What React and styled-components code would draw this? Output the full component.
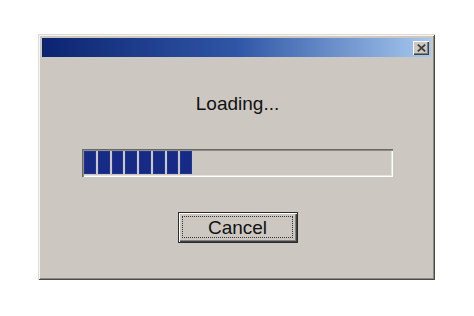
import React from "react";
import styled, { createGlobalStyle } from "styled-components";

const Global = createGlobalStyle`
  html, body { margin: 0; padding: 0; background: #ffffff; }
  body { font-family: "Liberation Sans", Arial, sans-serif; }
`;

const Page = styled.div`
  width: 474px;
  height: 316px;
  box-sizing: border-box;
  padding: 34px 0 0 38px;
`;

const Window = styled.div`
  width: 397px;
  height: 246px;
  box-sizing: border-box;
  padding: 4px;
  background: #ccc8c1;
  display: flex;
  flex-direction: column;
  box-shadow:
    inset 1px 1px 0 #dedad4,
    inset -1px -1px 0 #4a4a48,
    inset 2px 2px 0 #f6f5f2,
    inset -2px -2px 0 #8a8884;
`;

const TitleBar = styled.div`
  height: 19px;
  display: flex;
  align-items: center;
  justify-content: flex-end;
  padding-right: 2px;
  background: linear-gradient(to right, #0c2470 0%, #2f56a6 50%, #a6c8ee 100%);
`;

const CloseButton = styled.div`
  width: 16px;
  height: 14px;
  box-sizing: border-box;
  margin-top: 1px;
  background: #ccc8c1;
  display: flex;
  align-items: center;
  justify-content: center;
  box-shadow:
    inset 1px 1px 0 #ffffff,
    inset -1px -1px 0 #404040,
    inset -2px -2px 0 #808080;
`;

const Content = styled.div`
  flex: 1;
  display: flex;
  flex-direction: column;
  align-items: center;
  padding-top: 36px;
`;

const Message = styled.div`
  font-size: 19px;
  line-height: 22px;
  color: #111;
  margin-left: 2px;
`;

const Progress = styled.div`
  margin-top: 34px;
  width: 311px;
  height: 28px;
  box-sizing: border-box;
  padding: 2px 2px 3px 2px;
  display: flex;
  gap: 2px;
  margin-left: 2px;
  box-shadow:
    inset 1px 1px 0 #6a6864,
    inset 2px 2px 0 #8e8c88,
    inset -1px -1px 0 #ffffff,
    inset -2px -2px 0 #e4e2de;
`;

const Block = styled.div`
  width: 11.75px;
  height: 100%;
  background: #172a86;
  box-shadow: inset 0 0 0 1px #1f3594;
`;

const Button = styled.button`
  margin-top: 35px;
  margin-left: 2px;
  width: 120px;
  height: 31px;
  box-sizing: border-box;
  padding: 0;
  border: 1px solid #2a2a2a;
  background: #ccc8c1;
  font-family: "Liberation Sans", Arial, sans-serif;
  font-size: 19px;
  color: #111;
  position: relative;
  box-shadow:
    inset 1px 1px 0 #ffffff,
    inset -1px -1px 0 #404040,
    inset -2px -2px 0 #808080;
  &::after {
    content: "";
    position: absolute;
    inset: 3px 4px 4px 3px;
    border: 1px dotted #333;
  }
`;

export default function App() {
  const blocks = Array.from({ length: 8 });
  return (
    <Page>
      <Global />
      <Window>
        <TitleBar>
          <CloseButton>
            <svg width="9" height="8" viewBox="0 0 9 8">
              <path d="M0.8 0.6 L8.2 7.4 M8.2 0.6 L0.8 7.4" stroke="#3a3a3a" strokeWidth="1.7" />
            </svg>
          </CloseButton>
        </TitleBar>
        <Content>
          <Message>Loading...</Message>
          <Progress>
            {blocks.map((_, i) => (
              <Block key={i} />
            ))}
          </Progress>
          <Button>Cancel</Button>
        </Content>
      </Window>
    </Page>
  );
}
